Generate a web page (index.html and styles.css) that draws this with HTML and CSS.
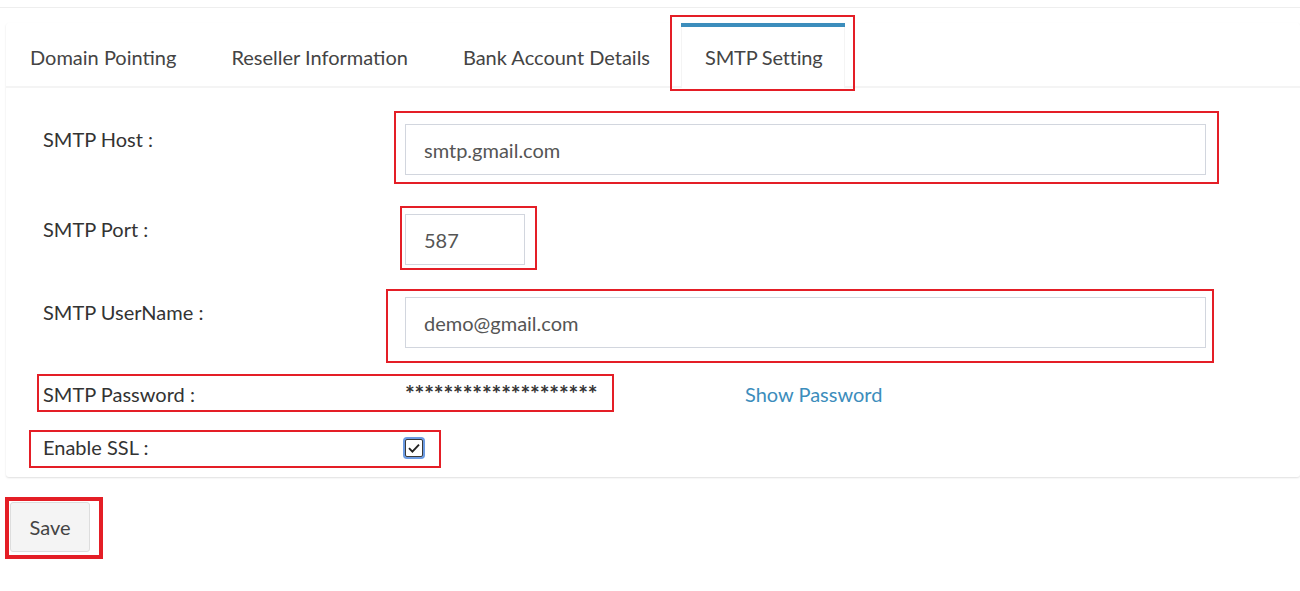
FILE: index.html
```html
<!DOCTYPE html>
<html lang="en">
<head>
<meta charset="utf-8">
<title>SMTP Setting</title>
<link rel="stylesheet" href="styles.css">
</head>
<body>
<div class="topbar"></div>
<div class="card">
  <ul class="tabs">
    <li class="tab"><a>Domain Pointing</a></li>
    <li class="tab"><a>Reseller Information</a></li>
    <li class="tab"><a>Bank Account Details</a></li>
    <li class="tab active"><a>SMTP Setting</a><span class="ann ann-tab"></span></li>
  </ul>
  <div class="content">
    <div class="row row-host">
      <label class="lbl">SMTP Host :</label>
      <div class="field">
        <input class="input input-wide" type="text" value="smtp.gmail.com" readonly>
        <span class="ann ann-host"></span>
      </div>
    </div>
    <div class="row row-port">
      <label class="lbl">SMTP Port :</label>
      <div class="field">
        <input class="input input-port" type="text" value="587" readonly>
        <span class="ann ann-port"></span>
      </div>
    </div>
    <div class="row row-user">
      <label class="lbl">SMTP UserName :</label>
      <div class="field">
        <input class="input input-wide" type="text" value="demo@gmail.com" readonly>
        <span class="ann ann-user"></span>
      </div>
    </div>
    <div class="row row-pass">
      <div class="pw-group">
        <label class="lbl">SMTP Password :</label>
        <span class="stars">********************</span>
        <span class="ann ann-pass"></span>
      </div>
      <a class="show-link">Show Password</a>
    </div>
    <div class="row row-ssl">
      <div class="ssl-group">
        <label class="lbl">Enable SSL :</label>
        <span class="checkbox">
          <svg viewBox="0 0 14 14" width="14" height="14"><polyline points="2,7.2 5.4,10.6 12,3.6" fill="none" stroke="#222" stroke-width="1.9"/></svg>
        </span>
        <span class="ann ann-ssl"></span>
      </div>
    </div>
  </div>
</div>
<div class="actions">
  <div class="field">
    <button class="btn" type="button">Save</button>
    <span class="ann ann-save"></span>
  </div>
</div>
</body>
</html>
```
FILE: styles.css
```css
html, body {
  margin: 0;
  background: #fff;
}
body {
  font-family: Lato, "Liberation Sans", sans-serif;
  font-size: 20px;
  color: #333;
}
.topbar {
  height: 7px;
  border-bottom: 1px solid #eee;
}
.card {
  margin: 15px 0 0 6px;
  background: #fff;
  border-radius: 3px;
  box-shadow: 0 1px 2px rgba(0, 0, 0, 0.13);
}
.tabs {
  display: flex;
  margin: 0;
  padding: 0;
  list-style: none;
  border-bottom: 2px solid #f4f4f4;
}
.tab {
  position: relative;
  margin: 0 7px -2px 0;
  border-top: 4px solid transparent;
}
.tab a {
  display: block;
  height: 61px;
  line-height: 61px;
  padding: 0 23px;
  border-left: 1px solid transparent;
  border-right: 1px solid transparent;
  color: #444;
}
.tab.active {
  border-top-color: #3c8dbc;
}
.tab.active a {
  padding: 0 22px 0 23px;
  background: #fff;
  border-color: #f4f4f4;
  letter-spacing: -0.2px;
}
.content {
  padding: 0 0 15px 37px;
}
.row {
  display: flex;
  align-items: flex-start;
}
.row-host { margin-top: 36px; }
.row-port { margin-top: 39px; }
.row-user { margin-top: 32px; }
.row-pass { margin-top: 31px; }
.row-ssl { margin-top: 23px; }
.lbl {
  flex: none;
  width: 362px;
  line-height: 30px;
}
.field {
  position: relative;
}
.input {
  display: block;
  box-sizing: border-box;
  height: 51px;
  padding: 0 18px;
  border: 1px solid #d2d6de;
  background: #fff;
  font: inherit;
  color: #555;
  outline: none;
}
.input-wide { width: 801px; }
.input-port { width: 120px; }
.pw-group {
  position: relative;
  display: flex;
  width: 554px;
  line-height: 30px;
}
.stars {
  font-size: 23px;
  font-weight: 700;
  color: #333;
  letter-spacing: -0.15px;
  margin-top: -1px;
}
.show-link {
  margin-left: 148px;
  line-height: 30px;
  color: #3c8dbc;
}
.ssl-group {
  position: relative;
  display: flex;
  align-items: center;
  width: 382px;
  height: 30px;
}
.checkbox {
  display: flex;
  align-items: center;
  justify-content: center;
  box-sizing: border-box;
  width: 18px;
  height: 18px;
  margin: 1px 0 0 0;
  border: 1px solid #3a3a3a;
  border-radius: 2px;
  background: #fff;
  box-shadow: 0 0 0 2px #6b9be3;
}
.actions {
  padding: 25px 0 30px 10px;
}
.actions .field {
  display: inline-block;
  vertical-align: top;
}
.btn {
  display: block;
  width: 80px;
  height: 50px;
  background: #f4f4f4;
  border: 1px solid #ddd;
  border-radius: 3px;
  font: inherit;
  color: #444;
  padding: 0;
}
.ann {
  position: absolute;
  border: 2px solid #e41e26;
  pointer-events: none;
}
.ann-tab { top: -12px; left: -11px; right: -10px; bottom: -3px; }
.ann-host { top: -13px; left: -11px; right: -13px; bottom: -9px; }
.ann-port { top: -8px; left: -5px; right: -12px; bottom: -5px; }
.ann-user { top: -8px; left: -19px; right: -8px; bottom: -15px; }
.ann-pass { top: -5px; left: -6px; right: -17px; bottom: -3px; }
.ann-ssl { top: -2px; left: -14px; right: -16px; bottom: -6px; }
.ann-save { top: -5px; left: -5px; right: -13px; bottom: -7px; border-width: 4px; }
```
